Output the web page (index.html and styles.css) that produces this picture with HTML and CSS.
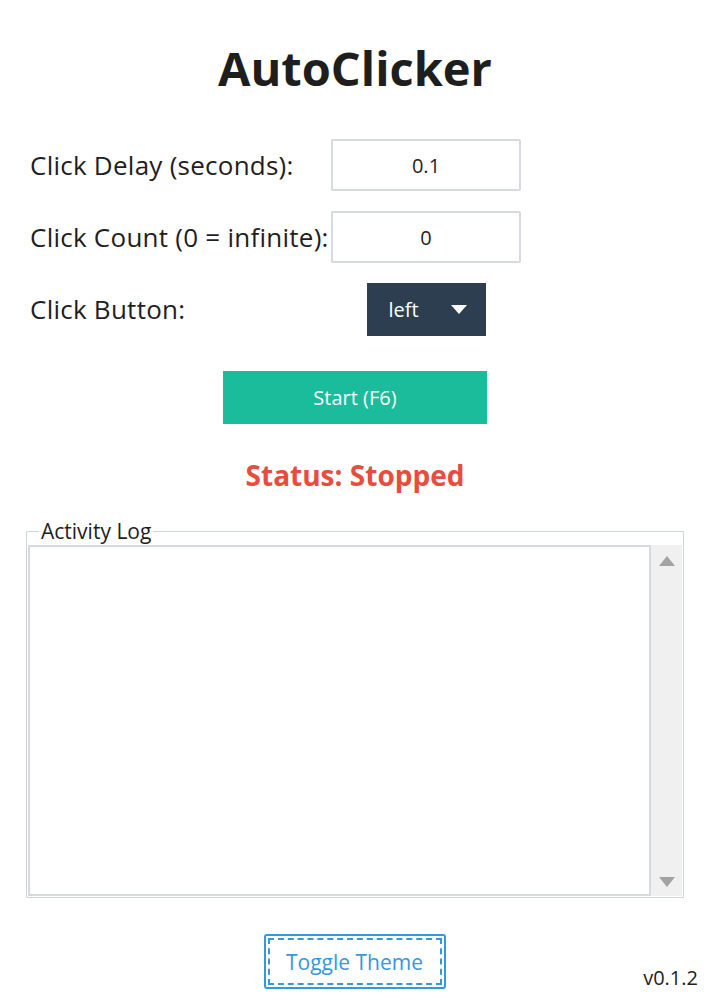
FILE: index.html
```html
<!DOCTYPE html>
<html lang="en">
<head>
<meta charset="utf-8">
<title>AutoClicker</title>
<link rel="stylesheet" href="styles.css">
</head>
<body>
<div class="app">
  <h1 class="title">AutoClicker</h1>

  <div class="form">
    <label class="label" for="delay">Click Delay (seconds):</label>
    <div class="field"><input id="delay" class="entry" type="text" value="0.1"></div>

    <label class="label" for="count">Click Count (0 = infinite):</label>
    <div class="field"><input id="count" class="entry" type="text" value="0"></div>

    <span class="label">Click Button:</span>
    <div class="field">
      <div class="dropdown">
        <span class="dropdown-text">left</span>
        <svg class="dropdown-arrow" width="16" height="9" viewBox="0 0 16 9"><polygon points="0,0 16,0 8,9" fill="#ffffff"/></svg>
      </div>
    </div>
  </div>

  <div class="start-row">
    <button class="start-btn" type="button">Start (F6)</button>
  </div>

  <div class="status">Status: Stopped</div>

  <fieldset class="log">
    <legend class="log-legend">Activity Log</legend>
    <div class="log-body">
      <div class="log-text"></div>
      <div class="scrollbar">
        <svg class="sb-arrow" width="16" height="10" viewBox="0 0 16 10"><polygon points="0,10 16,10 8,0" fill="#a3a3a3"/></svg>
        <svg class="sb-arrow" width="16" height="10" viewBox="0 0 16 10"><polygon points="0,0 16,0 8,10" fill="#a3a3a3"/></svg>
      </div>
    </div>
  </fieldset>

  <div class="footer">
    <div class="footer-side"></div>
    <button class="toggle-btn" type="button"><span class="toggle-inner">Toggle Theme</span></button>
    <div class="version">v0.1.2</div>
  </div>
</div>
</body>
</html>
```

FILE: styles.css
```css
html, body {
  margin: 0;
  padding: 0;
  background: #ffffff;
}

body {
  font-family: "Open Sans", "Noto Sans", "DejaVu Sans", sans-serif;
  color: #1e1e1e;
}

.app {
  width: 710px;
  height: 1000px;
  box-sizing: border-box;
  padding-top: 40px;
  display: flex;
  flex-direction: column;
}

.title {
  margin: 0;
  font-size: 47px;
  line-height: 56px;
  font-weight: 700;
  text-align: center;
  color: #1e1e1e;
}

.form {
  margin-top: 43px;
  padding-left: 30px;
  display: grid;
  grid-template-columns: 301px 190px;
  grid-auto-rows: 52px;
  row-gap: 20px;
  align-items: center;
}

.label {
  font-size: 26px;
  line-height: 32px;
  letter-spacing: 0.25px;
  color: #1e1e1e;
  white-space: nowrap;
}

.field {
  display: flex;
  justify-content: center;
  align-items: center;
  height: 100%;
}

.entry {
  box-sizing: border-box;
  width: 190px;
  height: 52px;
  border: 2px solid #d6d9de;
  border-radius: 2px;
  background: #ffffff;
  font-family: "Open Sans", "Noto Sans", sans-serif;
  font-size: 20px;
  color: #1e1e1e;
  text-align: center;
  padding: 0;
  outline: none;
}

.dropdown {
  box-sizing: border-box;
  width: 119px;
  height: 53px;
  margin-top: 1px;
  background: #2c3e50;
  display: flex;
  align-items: center;
  padding-left: 22px;
  padding-right: 19px;
  justify-content: space-between;
}

.dropdown-text {
  color: #ffffff;
  font-size: 20px;
  line-height: 24px;
}

.dropdown-arrow {
  display: block;
}

.start-row {
  display: flex;
  justify-content: center;
  margin-top: 36px;
}

.start-btn {
  width: 264px;
  height: 53px;
  border: none;
  background: #1abc9c;
  color: #ffffff;
  font-family: "Open Sans", "Noto Sans", sans-serif;
  font-size: 20px;
  padding: 0;
}

.status {
  margin-top: 33px;
  font-size: 28px;
  line-height: 36px;
  font-weight: 700;
  color: #e74c3c;
  text-align: center;
}

.log {
  margin: 24px 26px 0 26px;
  padding: 0 1px 1px 1px;
  border: 1px solid #cfd4da;
  border-radius: 1px;
  min-width: 0;
}

.log-legend {
  margin-left: 11px;
  padding: 0 2px;
  font-size: 21px;
  line-height: 28px;
  color: #1e1e1e;
}

.log-body {
  display: flex;
  height: 351px;
}

.log-text {
  flex: 1;
  box-sizing: border-box;
  border: 2px solid #d6d9de;
  background: #ffffff;
}

.scrollbar {
  width: 31px;
  background: #f0f0f0;
  display: flex;
  flex-direction: column;
  justify-content: space-between;
  align-items: center;
  padding: 11px 0 9px 0;
  box-sizing: border-box;
}

.sb-arrow {
  display: block;
}

.footer {
  margin-top: 36px;
  display: grid;
  grid-template-columns: 1fr auto 1fr;
  align-items: end;
}

.toggle-btn {
  position: relative;
  width: 182px;
  height: 55px;
  box-sizing: border-box;
  border: 2px solid #3498db;
  border-radius: 3px;
  background: #ffffff;
  color: #3498db;
  font-family: "Open Sans", "Noto Sans", sans-serif;
  font-size: 21px;
  padding: 0;
  margin-left: -1px;
}

.toggle-btn::after {
  content: "";
  position: absolute;
  inset: 2px;
  border: 2px dashed #3498db;
}

.toggle-inner {
  position: relative;
}

.version {
  justify-self: end;
  padding-right: 12px;
  font-size: 20px;
  line-height: 24px;
  margin-bottom: -1px;
  color: #1e1e1e;
}
```
